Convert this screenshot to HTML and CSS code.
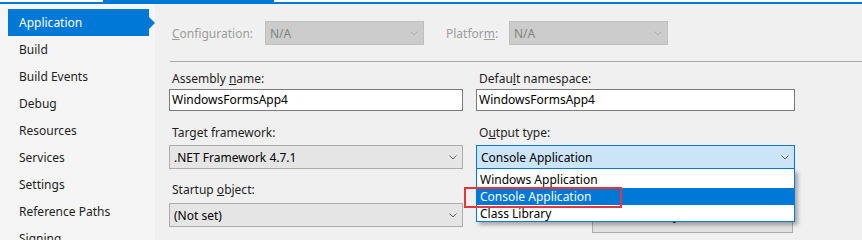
FILE: index.html
```html
<!DOCTYPE html>
<html lang="en">
<head>
  <meta charset="UTF-8">
  <title>Application Properties</title>
  <link rel="stylesheet" href="styles.css">
</head>
<body>
  <div class="topbar">
    <div class="tb-line tb-left"></div>
    <div class="tb-tab"></div>
    <div class="tb-line tb-rest"></div>
  </div>

  <div class="main">
    <nav class="sidebar">
      <div class="nav-item active">Application</div>
      <div class="nav-item">Build</div>
      <div class="nav-item">Build Events</div>
      <div class="nav-item">Debug</div>
      <div class="nav-item">Resources</div>
      <div class="nav-item">Services</div>
      <div class="nav-item">Settings</div>
      <div class="nav-item">Reference Paths</div>
      <div class="nav-item">Signing</div>
    </nav>

    <section class="content">
      <div class="config-row">
        <span class="cfg-label cfg-conf"><u>C</u>onfiguration:</span>
        <div class="combo disabled">
          <span>N/A</span>
          <svg class="chev" width="8" height="5" viewBox="0 0 8 5"><polyline points="0.5,0.5 4,4 7.5,0.5"/></svg>
        </div>
        <span class="cfg-label cfg-plat">Platfor<u>m</u>:</span>
        <div class="combo disabled">
          <span>N/A</span>
          <svg class="chev" width="8" height="5" viewBox="0 0 8 5"><polyline points="0.5,0.5 4,4 7.5,0.5"/></svg>
        </div>
      </div>

      <div class="sep"></div>

      <div class="field-row row-1">
        <div class="field">
          <label class="lbl">Assembly <u>n</u>ame:</label>
          <div class="textbox">WindowsFormsApp4</div>
        </div>
        <div class="field">
          <label class="lbl">Defau<u>l</u>t namespace:</label>
          <div class="textbox">WindowsFormsApp4</div>
        </div>
      </div>

      <div class="field-row row-2">
        <div class="field">
          <label class="lbl">Tar<u>g</u>et framework:</label>
          <div class="combo">
            <span>.NET Framework 4.7.1</span>
            <svg class="chev" width="8" height="5" viewBox="0 0 8 5"><polyline points="0.5,0.5 4,4 7.5,0.5"/></svg>
          </div>
        </div>
        <div class="field">
          <label class="lbl">O<u>u</u>tput type:</label>
          <div class="dropdown-wrap">
            <div class="combo focused">
              <span>Console Application</span>
              <svg class="chev" width="8" height="5" viewBox="0 0 8 5"><polyline points="0.5,0.5 4,4 7.5,0.5"/></svg>
            </div>
            <ul class="dropdown-list">
              <li>Windows Application</li>
              <li class="selected">Console Application</li>
              <li>Class Library</li>
            </ul>
            <div class="highlight-box"></div>
          </div>
        </div>
      </div>

      <div class="field-row row-3">
        <div class="field">
          <label class="lbl">Startup <u>o</u>bject:</label>
          <div class="combo">
            <span>(Not set)</span>
            <svg class="chev" width="8" height="5" viewBox="0 0 8 5"><polyline points="0.5,0.5 4,4 7.5,0.5"/></svg>
          </div>
        </div>
        <div class="field">
          <button class="btn-info">Assembl<u>y</u> Information...</button>
        </div>
      </div>
    </section>
  </div>
</body>
</html>
```

FILE: styles.css
```css
* {
    margin: 0;
    padding: 0;
    box-sizing: border-box;
}

body {
    font-family: 'Noto Sans', 'Liberation Sans', sans-serif;
    font-size: 12px;
    color: #1e1e1e;
    background: #f0f0f0;
    width: 862px;
    height: 240px;
    overflow: hidden;
}

/* top tab strip */
.topbar {
    display: flex;
    height: 4px;
    background: #fbfbfb;
}

.tb-line {
    border-bottom: 2px solid #0078d7;
}

.tb-left {
    width: 103px;
}

.tb-tab {
    width: 171px;
    background: #0078d7;
}

.tb-rest {
    flex: 1;
}

.main {
    display: flex;
    height: 236px;
    overflow: hidden;
}

/* left navigation */
.sidebar {
    width: 155px;
    flex-shrink: 0;
    background: #f5f5f5;
    padding-top: 5px;
}

.nav-item {
    position: relative;
    width: 141px;
    height: 27px;
    line-height: 27px;
    margin-left: 8px;
    padding-left: 11px;
    white-space: nowrap;
}

.nav-item.active {
    background: #0078d7;
    color: #fff;
}

.nav-item.active::after {
    content: '';
    position: absolute;
    right: -6px;
    top: 8px;
    border-left: 6px solid #0078d7;
    border-top: 6px solid transparent;
    border-bottom: 6px solid transparent;
}

/* property page */
.content {
    flex: 1;
    padding: 17px 0 0 14px;
}

.config-row {
    display: flex;
    align-items: center;
}

.cfg-label {
    color: #9d9d9d;
}

.cfg-conf {
    width: 96px;
    padding-left: 3px;
}

.cfg-plat {
    width: 85px;
    padding-left: 22px;
}

.combo {
    display: flex;
    align-items: center;
    justify-content: space-between;
    height: 24px;
    padding: 0 5px 0 4px;
    background: #e5e5e5;
    border: 1px solid #acacac;
    color: #000;
    white-space: nowrap;
}

.config-row .combo {
    width: 159px;
}

.combo.disabled {
    background: #cccccc;
    border-color: #bfbfbf;
    color: #838383;
}

.combo.focused {
    background: #cce4f7;
    border-color: #0078d7;
}

.chev {
    fill: none;
    stroke: #606060;
    stroke-width: 1;
}

.combo.disabled .chev {
    stroke: #b0b0b0;
}

.sep {
    height: 1px;
    background: #a8a8a8;
    margin: 16px 0 0 1px;
}

.field-row {
    display: grid;
    grid-template-columns: 294px 319px;
    column-gap: 13px;
}

.row-1 {
    margin-top: 9px;
}

.row-2 {
    margin-top: 14px;
}

.row-3 {
    margin-top: 13px;
}

.lbl {
    display: block;
    line-height: 16px;
    padding-left: 3px;
}

.row-1 .lbl {
    margin-bottom: 2px;
}

.row-2 .lbl {
    margin-bottom: 4px;
}

.row-3 .lbl {
    margin-bottom: 5px;
}

.textbox {
    height: 22px;
    line-height: 20px;
    padding-left: 2px;
    background: #fff;
    border: 1px solid #7a7a7a;
    color: #000;
}

/* open dropdown */
.dropdown-wrap {
    position: relative;
    z-index: 5;
}

.dropdown-list {
    position: absolute;
    top: 100%;
    left: 0;
    right: 0;
    list-style: none;
    background: #fff;
    border: 1px solid #0078d7;
    border-top: none;
    box-shadow: 3px 3px 4px rgba(0, 0, 0, 0.3);
    padding-top: 2px;
}

.dropdown-list li {
    height: 17px;
    line-height: 17px;
    padding-left: 3px;
    color: #000;
}

.dropdown-list li:last-child {
    height: 16px;
}

.dropdown-list li.selected {
    background: #0078d7;
    color: #fff;
}

.highlight-box {
    position: absolute;
    left: -12px;
    top: 42px;
    width: 158px;
    height: 21px;
    border: 2px solid #e8353b;
}

.btn-info {
    display: block;
    margin: 21px 0 0 116px;
    width: 201px;
    height: 30px;
    padding-bottom: 5px;
    background: #e1e1e1;
    border: 1px solid #adadad;
    font-family: inherit;
    font-size: 12px;
    color: #000;
}
```
